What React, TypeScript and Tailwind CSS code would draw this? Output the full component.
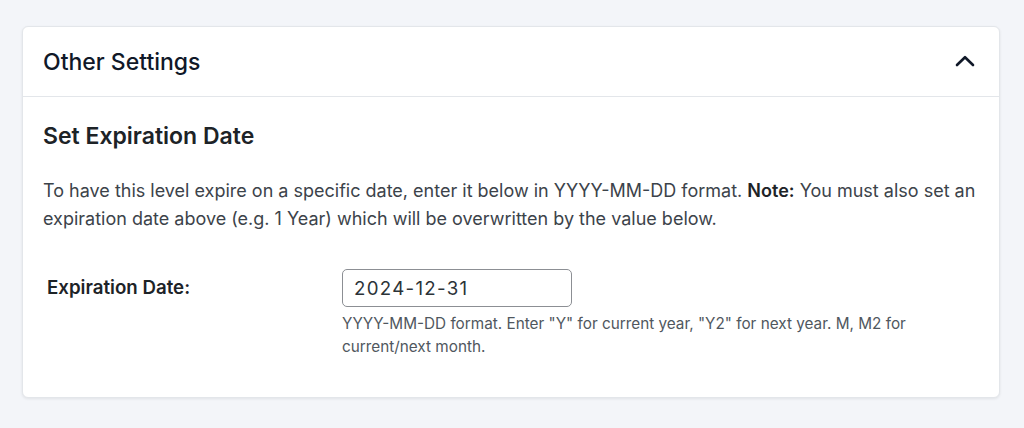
import React from "react";

export default function App() {
  return (
    <div
      className="w-[1024px] h-[428px] bg-[#f3f5f9] pt-[26px] pl-[22px] pr-[24px]"
      style={{ fontFamily: "Inter, 'Noto Sans', sans-serif" }}
    >
      <div className="bg-white rounded-[6px] border border-[#e3e6ea] shadow-[0_1px_3px_rgba(0,0,0,0.08)] h-[372px]">
        <div className="h-[70px] px-5 flex items-center justify-between border-b border-[#e3e6ea]">
          <h2 className="text-[23px] leading-[30px] font-medium text-[#101828]">Other Settings</h2>
          <svg width="20" height="12" viewBox="0 0 20 12" className="mr-[4px] -mt-[2px]">
            <path d="M2 10 L10 2.2 L18 10" fill="none" stroke="#101828" strokeWidth="2.6" strokeLinecap="round" strokeLinejoin="round" />
          </svg>
        </div>
        <div className="px-5">
          <h3 className="mt-[24px] text-[23px] leading-[30px] font-semibold text-[#1d2327]">Set Expiration Date</h3>
          <p className="mt-[26px] text-[18px] leading-[28px] text-[#3c434a]">
            To have this level expire on a specific date, enter it below in YYYY-MM-DD format. <strong className="font-semibold text-[#1d2327]">Note:</strong> You must also set an expiration date above (e.g. 1 Year) which will be overwritten by the value below.
          </p>
          <div className="mt-[36px] flex">
            <div className="w-[299px] pl-1 h-[38px] flex items-center text-[18.7px] font-semibold text-[#1d2327]">Expiration Date:</div>
            <div>
              <input
                type="text"
                defaultValue="2024-12-31"
                className="w-[230px] h-[38px] border border-[#8c8f94] rounded-[5px] pl-[11px] pr-3 text-[18.7px] tracking-[1.3px] text-[#2c3338] outline-none"
                style={{ fontFamily: "Inter, 'Noto Sans', sans-serif" }}
              />
              <p className="mt-[4.5px] text-[15.3px] leading-[23px] text-[#50575e] w-[600px]">
                YYYY-MM-DD format. Enter "Y" for current year, "Y2" for next year. M, M2 for current/next month.
              </p>
            </div>
          </div>
        </div>
      </div>
    </div>
  );
}
